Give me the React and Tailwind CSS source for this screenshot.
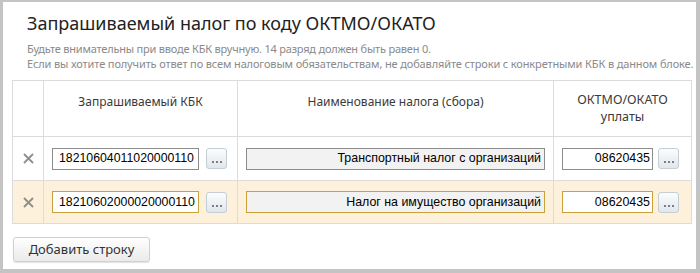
import { useState } from "react";

const rows = [
  { kbk: "18210604011020000110", name: "Транспортный налог с организаций", oktmo: "08620435", active: false },
  { kbk: "18210602000020000110", name: "Налог на имущество организаций", oktmo: "08620435", active: true },
];

const DotsButton = () => (
  <button className="w-[21px] h-[21px] shrink-0 rounded-[3px] border border-[#c6cdd5] bg-gradient-to-b from-[#fbfcfd] to-[#e2e7ec] flex items-end justify-center pb-[5px]">
    <span className="flex gap-[2px]">
      <span className="w-[2px] h-[2px] bg-[#7a7f86]"></span>
      <span className="w-[2px] h-[2px] bg-[#7a7f86]"></span>
      <span className="w-[2px] h-[2px] bg-[#7a7f86]"></span>
    </span>
  </button>
);

const Cross = () => (
  <svg width="11" height="11" viewBox="0 0 11 11" className="mx-auto">
    <path d="M1 1L10 10M10 1L1 10" stroke="#8d8d8d" strokeWidth="1.8" />
  </svg>
);

const App = () => {
  const [items] = useState(rows);

  return (
    <div className="w-[700px] h-[273px] overflow-hidden bg-white border-[#c4c4c4] border-l-[3px] border-t-2 border-r-[4px] border-b-[4px] font-['Noto_Sans',sans-serif] text-[#333]">
      <div className="pl-[24px] pt-[8px]">
        <h1 className="text-[18px] leading-[26px] text-[#222] font-normal">
          Запрашиваемый налог по коду ОКТМО/ОКАТО
        </h1>
        <p className="mt-[5px] text-[11px] leading-[15px] tracking-[-0.2px] text-[#8a8a8a] whitespace-nowrap">
          Будьте внимательны при вводе КБК вручную. 14 разряд должен быть равен 0.
        </p>
        <p className="text-[11px] leading-[15px] tracking-[-0.13px] text-[#8a8a8a] whitespace-nowrap">
          Если вы хотите получить ответ по всем налоговым обязательствам, не добавляйте строки с конкретными КБК в данном блоке.
        </p>
      </div>

      <div className="pl-[9px] mt-[9px]">
        <table className="border-collapse text-[12px]">
          <thead>
            <tr className="h-[56px]">
              <th className="w-[31px] border border-[#dcdcdc]"></th>
              <th className="w-[194px] border border-[#dcdcdc] align-top pt-[12px] font-normal text-[#3a3a3a]">
                Запрашиваемый КБК
              </th>
              <th className="w-[316px] border border-[#dcdcdc] align-top pt-[12px] font-normal text-[#3a3a3a]">
                Наименование налога (сбора)
              </th>
              <th className="w-[138px] border border-[#dcdcdc] align-top pt-[10px] font-normal text-[#3a3a3a] leading-[17px] text-[12.5px]">
                ОКТМО/ОКАТО
                <br />
                уплаты
              </th>
            </tr>
          </thead>
          <tbody className="font-['Liberation_Sans',Arial,sans-serif] text-[12.4px] text-black">
            {items.map((row, i) => {
              const bd = row.active ? "border-[#c9a03a]" : "border-[#8c8c8c]";
              return (
                <tr key={i} className={`${i === 0 ? "h-[44px]" : "h-[43px]"} ${row.active ? "bg-[#fdf1db]" : "bg-white"}`}>
                  <td className="border border-[#dcdcdc] text-center">
                    <Cross />
                  </td>
                  <td className="border border-[#dcdcdc] px-[8px]">
                    <div className="flex items-center gap-[7px]">
                      <div className={`w-[147px] h-[22px] border ${bd} bg-white flex items-center overflow-hidden pl-[6px] whitespace-nowrap text-[12.3px]`}>
                        {row.kbk}
                      </div>
                      <DotsButton />
                    </div>
                  </td>
                  <td className="border border-[#dcdcdc] px-[8px]">
                    <div className={`w-[299px] h-[22px] border ${bd} bg-[#f2f2f2] flex items-center justify-end pr-[3px] whitespace-nowrap`}>
                      {row.name}
                    </div>
                  </td>
                  <td className="border border-[#dcdcdc] pl-[8px] pr-[9px]">
                    <div className="flex items-center gap-[5px]">
                      <div className={`w-[91px] h-[22px] border ${bd} bg-white flex items-center justify-end pr-[2px]`}>
                        {row.oktmo}
                      </div>
                      <DotsButton />
                    </div>
                  </td>
                </tr>
              );
            })}
          </tbody>
        </table>

        <button className="mt-[13px] ml-[1px] w-[137px] h-[25px] rounded-[3px] border border-[#d0d0d0] bg-gradient-to-b from-[#ffffff] to-[#eaeaea] shadow-[0_1px_1px_rgba(0,0,0,0.12)] text-[13px] text-[#333]">
          Добавить строку
        </button>
      </div>
    </div>
  );
};

export default App;
